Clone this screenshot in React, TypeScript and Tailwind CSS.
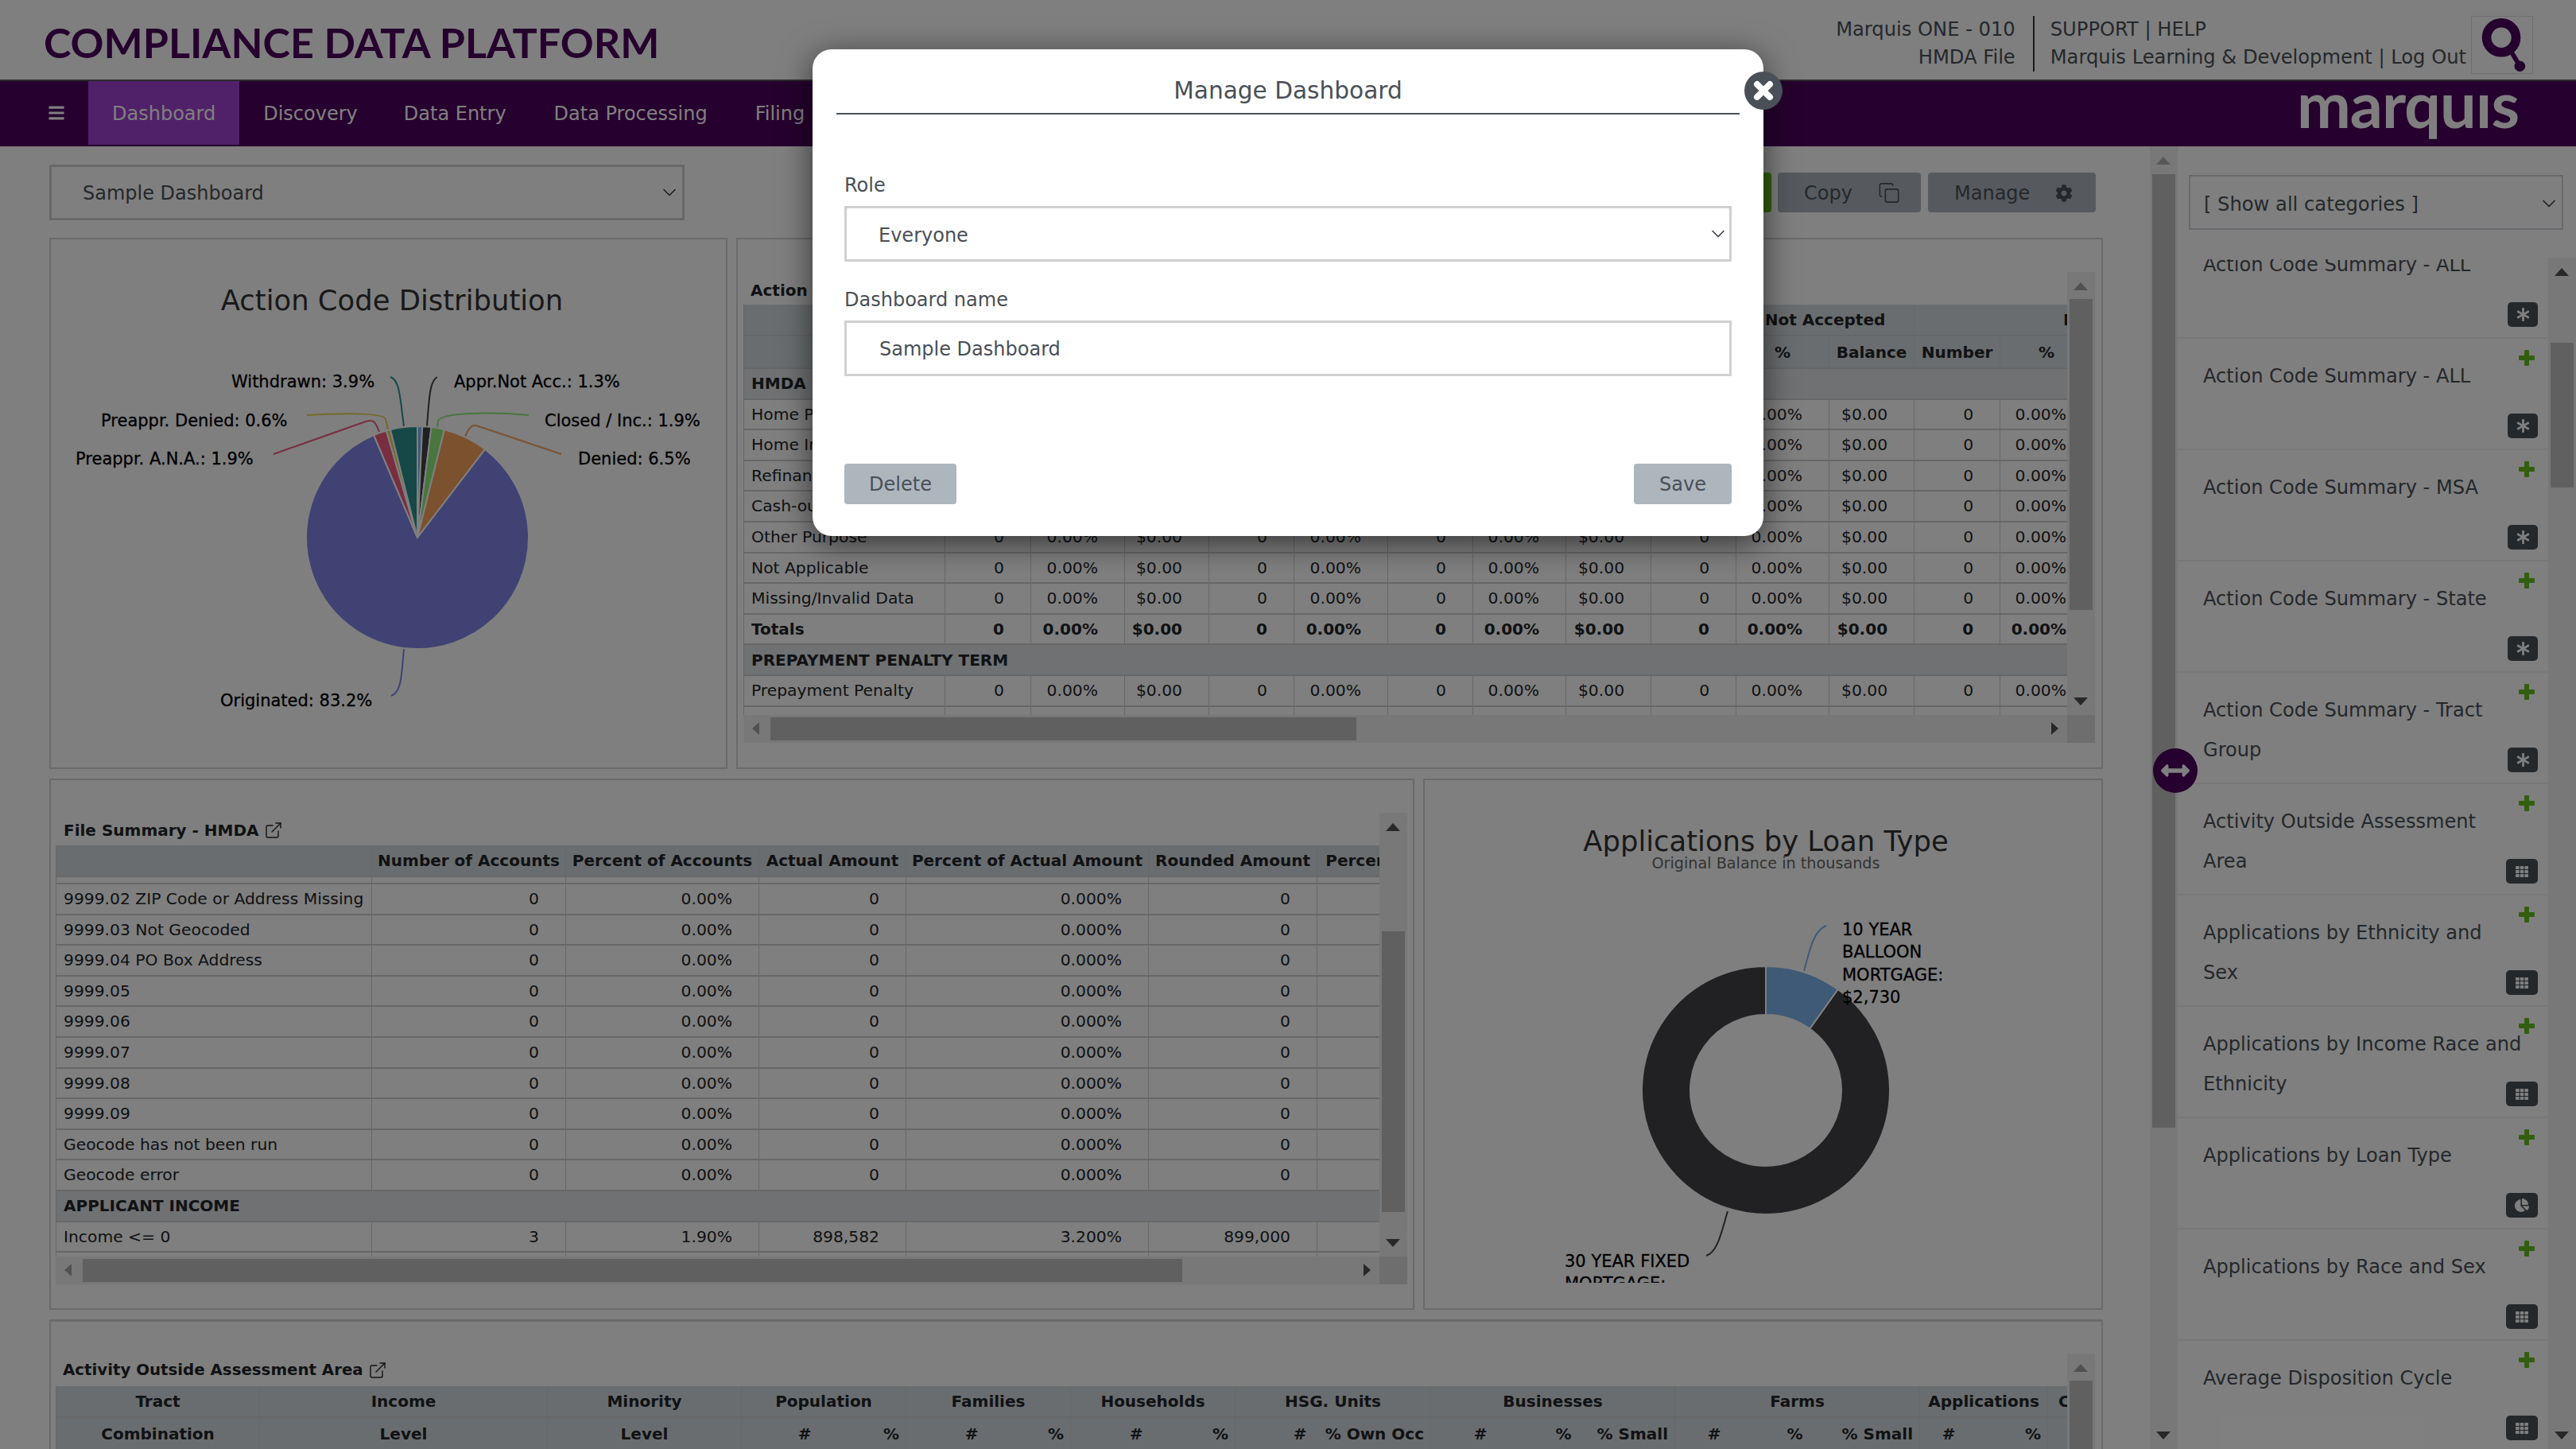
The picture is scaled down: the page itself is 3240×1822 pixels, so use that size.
import { ChevronDown, Copy, ExternalLink } from "lucide-react";
import { FaArrowsAltH, FaAsterisk, FaBars, FaChartPie, FaCog, FaTh } from "react-icons/fa";

const Chevron = ({ className }: { className: string }) => (
  <ChevronDown strokeWidth={1.3} className={"pointer-events-none absolute h-[28px] w-[28px] text-[#343a40] " + className} />
);

const UpArrow = ({ c }: { c: string }) => <div className={"h-0 w-0 border-x-[9px] border-b-[10px] border-x-transparent " + c} />;
const DownArrow = ({ c }: { c: string }) => <div className={"h-0 w-0 border-x-[9px] border-t-[10px] border-x-transparent " + c} />;

function VBar({ thumb, top = "border-b-[#505050]", className = "" }: { thumb: string; top?: string; className?: string }) {
  return (
    <div className={"relative w-[35px] shrink-0 bg-[#f1f1f1] px-[3px] " + className}>
      <div className={"bg-[#c1c1c1] " + thumb} />
      <div className="absolute left-[8px] top-[13px]"><UpArrow c={top} /></div>
      <div className="absolute bottom-[12px] left-[8px]"><DownArrow c="border-t-[#505050]" /></div>
    </div>
  );
}

function HBar({ thumb }: { thumb: string }) {
  return (
    <div className="flex">
      <div className="relative flex h-[35px] w-[1665px] bg-[#f1f1f1] py-[3px]">
        <div className={"bg-[#c1c1c1] " + thumb} />
        <div className="absolute left-[11px] top-[9px] h-0 w-0 border-y-[8px] border-r-[9px] border-y-transparent border-r-[#a3a3a3]" />
        <div className="absolute right-[11px] top-[9px] h-0 w-0 border-y-[8px] border-l-[9px] border-y-transparent border-l-[#505050]" />
      </div>
      <div className="h-[35px] w-[35px] bg-[#dcdcdc]" />
    </div>
  );
}

const cellBase = "border-x border-b-2 border-[#cfcfcf] whitespace-nowrap overflow-hidden";
const num = "h-[38.6px] pr-[33px] text-right " + cellBase;
const lab = "h-[38.6px] pl-[9px] text-left " + cellBase;
const head = "bg-[#d5dadf] text-[20px] font-bold text-center " + cellBase;

const summaryCols = ["w-[253px]", "w-[108px]", "w-[118px]", "w-[106px]", "w-[107px]", "w-[118px]", "w-[107px]", "w-[117px]", "w-[107px]", "w-[107px]", "w-[117px]", "w-[107px]", "w-[108px]", "w-[117px]", "w-[229px]"];
const zeroRow = ["0", "0.00%", "$0.00", "0", "0.00%", "0", "0.00%", "$0.00", "0", "0.00%", "$0.00", "0", "0.00%"];

function SummaryRow({ label, bold }: { label: string; bold?: boolean }) {
  return (
    <tr className={bold ? "text-[20px] font-bold" : ""}>
      <td className={lab}>{label}</td>
      {zeroRow.map((v, i) => (
        <td key={i} className={num}>{v}</td>
      ))}
      <td className={num} />
    </tr>
  );
}

const Section = ({ label, span }: { label: string; span: number }) => (
  <tr>
    <td colSpan={span} className={"h-[38.6px] bg-[#dee2e6] pl-[9px] text-[20px] font-bold " + cellBase}>{label}</td>
  </tr>
);

function ActionSummaryPanel() {
  return (
    <div className="h-[668px] w-[1719px] border-2 border-[#d4d4d8] pl-[7px] pt-[41px]">
      <div className="flex h-[557px]">
        <div className="relative w-[1665px] overflow-hidden pt-[41px] text-[20.3px] text-[#212529]">
          <div className="absolute left-[9px] top-[8px] text-[20px] font-bold">Action Code Summary - ALL</div>
          <table className="w-[1926px] table-fixed border-collapse">
            <colgroup>
              {summaryCols.map((c, i) => (
                <col key={i} className={c} />
              ))}
            </colgroup>
            <tbody>
              <tr className="h-[39px]">
                <td className={head} />
                <td colSpan={3} className={head} />
                <td colSpan={2} className={head} />
                <td colSpan={3} className={head} />
                <td className={head} />
                <td colSpan={2} className={head}>Not Accepted</td>
                <td colSpan={3} className={head}>Denied</td>
              </tr>
              <tr className="h-[41px]">
                <td className={head} />
                {["Number", "%", "Balance", "Number", "%", "Number", "%", "Balance", "Number", "%", "Balance", "Number", "%"].map((h, i) => (
                  <td key={i} className={head}>{h}</td>
                ))}
                <td className={head} />
              </tr>
              <Section label="HMDA LOAN PURPOSE" span={15} />
              {["Home Purchase", "Home Improvement", "Refinancing", "Cash-out Refinancing", "Other Purpose", "Not Applicable", "Missing/Invalid Data"].map((r) => (
                <SummaryRow key={r} label={r} />
              ))}
              <SummaryRow label="Totals" bold />
              <Section label="PREPAYMENT PENALTY TERM" span={15} />
              <SummaryRow label="Prepayment Penalty" />
              <SummaryRow label="No Prepayment Penalty" />
            </tbody>
          </table>
        </div>
        <VBar thumb="mt-[34px] h-[391px]" top="border-b-[#a3a3a3]" />
      </div>
      <HBar thumb="ml-[34px] w-[737px]" />
    </div>
  );
}

const fileCols = ["w-[397px]", "w-[244px]", "w-[243px]", "w-[185px]", "w-[305px]", "w-[212px]", "w-[340px]"];
const fileRows: string[][] = [
  ["9999.02 ZIP Code or Address Missing", "0", "0.00%", "0", "0.000%", "0"],
  ["9999.03 Not Geocoded", "0", "0.00%", "0", "0.000%", "0"],
  ["9999.04 PO Box Address", "0", "0.00%", "0", "0.000%", "0"],
  ["9999.05", "0", "0.00%", "0", "0.000%", "0"],
  ["9999.06", "0", "0.00%", "0", "0.000%", "0"],
  ["9999.07", "0", "0.00%", "0", "0.000%", "0"],
  ["9999.08", "0", "0.00%", "0", "0.000%", "0"],
  ["9999.09", "0", "0.00%", "0", "0.000%", "0"],
  ["Geocode has not been run", "0", "0.00%", "0", "0.000%", "0"],
  ["Geocode error", "0", "0.00%", "0", "0.000%", "0"],
];

const FileRow = ({ r }: { r: string[] }) => (
  <tr>
    {r.map((v, i) => (
      <td key={i} className={i === 0 ? lab : num}>{v}</td>
    ))}
    <td className={num} />
  </tr>
);

function FileSummaryPanel() {
  return (
    <div className="h-[668px] w-[1717px] border-2 border-[#d4d4d8] pl-[6px] pt-[41px]">
      <div className="flex h-[558px]">
        <div className="relative w-[1665px] overflow-hidden pt-[41px] text-[20.3px] text-[#212529]">
          <div className="absolute left-[10px] top-[7px] flex items-center gap-[6px] text-[20px] font-bold">
            File Summary - HMDA <ExternalLink className="h-[24px] w-[24px]" strokeWidth={1.4} />
          </div>
          <table className="w-[1926px] table-fixed border-collapse">
            <colgroup>
              {fileCols.map((c, i) => (
                <col key={i} className={c} />
              ))}
            </colgroup>
            <tbody>
              <tr className="h-[39px]">
                {["", "Number of Accounts", "Percent of Accounts", "Actual Amount", "Percent of Actual Amount", "Rounded Amount", "Percent of Rounded Amount"].map((h, i) => (
                  <td key={i} className={head}>{h}</td>
                ))}
              </tr>
              <tr className="h-[9px]">
                {fileCols.map((c) => (
                  <td key={c} className={cellBase} />
                ))}
              </tr>
              {fileRows.map((r) => (
                <FileRow key={r[0]} r={r} />
              ))}
              <Section label="APPLICANT INCOME" span={7} />
              <FileRow r={["Income <= 0", "3", "1.90%", "898,582", "3.200%", "899,000"]} />
              <FileRow r={["0 < Income <= 50", "", "", "", "", ""]} />
            </tbody>
          </table>
        </div>
        <VBar thumb="mt-[149px] h-[353px]" />
      </div>
      <HBar thumb="ml-[34px] w-[1383px]" />
    </div>
  );
}

const tractCols = ["w-[256px]", "w-[362px]", "w-[244px]", "w-[96px]", "w-[111px]", "w-[99px]", "w-[108px]", "w-[99px]", "w-[108px]", "w-[98px]", "w-[148px]", "w-[79px]", "w-[106px]", "w-[122px]", "w-[66px]", "w-[103px]", "w-[139px]", "w-[53px]", "w-[108px]", "w-[130px]"];
const tractGroups: [string, number][] = [
  ["Tract", 1], ["Income", 1], ["Minority", 1], ["Population", 2], ["Families", 2], ["Households", 2], ["HSG. Units", 2], ["Businesses", 3], ["Farms", 3], ["Applications", 2],
];
const tractSubs: [string, boolean][] = [
  ["#", true], ["%", false], ["#", true], ["%", false], ["#", true], ["%", false], ["#", true], ["% Own Occ", false],
  ["#", true], ["%", false], ["% Small", false], ["#", true], ["%", false], ["% Small", false], ["#", true], ["%", false],
];

function ActivityPanel() {
  return (
    <div className="mt-[12px] h-[200px] w-[2583px] border-2 border-t-[3px] border-[#d4d4d8] pl-[6px] pt-[40px]">
      <div className="flex h-[160px]">
        <div className="relative w-[2530px] overflow-hidden pt-[41px] text-[20px] text-[#212529]">
          <div className="absolute left-[9px] top-[6px] flex items-center gap-[6px] text-[19.8px] font-bold">
            Activity Outside Assessment Area <ExternalLink className="h-[24px] w-[24px]" strokeWidth={1.4} />
          </div>
          <table className="w-[2635px] table-fixed border-collapse">
            <colgroup>
              {tractCols.map((c, i) => (
                <col key={i} className={c} />
              ))}
            </colgroup>
            <tbody>
              <tr className="h-[39px]">
                {tractGroups.map(([g, s]) => (
                  <td key={g} colSpan={s} className={head}>{g}</td>
                ))}
                <td className={"bg-[#d5dadf] pl-[13px] text-left font-bold " + cellBase}>Census</td>
              </tr>
              <tr className="h-[41px]">
                {["Combination", "Level", "Level"].map((h, i) => (
                  <td key={i} className={head}>{h}</td>
                ))}
                {tractSubs.map(([h, first], i) => (
                  <td key={i} className={"border-b-2 border-[#cfcfcf] bg-[#d5dadf] pr-[8px] text-right font-bold whitespace-nowrap " + (first ? "border-l" : "")}>{h}</td>
                ))}
                <td className={head} />
              </tr>
            </tbody>
          </table>
        </div>
        <VBar thumb="mt-[34px] h-[200px]" top="border-b-[#a3a3a3]" />
      </div>
    </div>
  );
}

const toPoint = (cx: number, cy: number, r: number, a: number) => {
  const t = ((a - 90) * Math.PI) / 180;
  return [cx + r * Math.cos(t), cy + r * Math.sin(t)];
};

function arc(cx: number, cy: number, r: number, r2: number, a0: number, a1: number) {
  const [x0, y0] = toPoint(cx, cy, r, a0);
  const [x1, y1] = toPoint(cx, cy, r, a1);
  const large = a1 - a0 > 180 ? 1 : 0;
  if (r2 === 0) return `M${cx} ${cy}L${x0} ${y0}A${r} ${r} 0 ${large} 1 ${x1} ${y1}Z`;
  const [x2, y2] = toPoint(cx, cy, r2, a1);
  const [x3, y3] = toPoint(cx, cy, r2, a0);
  return `M${x0} ${y0}A${r} ${r} 0 ${large} 1 ${x1} ${y1}L${x2} ${y2}A${r2} ${r2} 0 ${large} 0 ${x3} ${y3}Z`;
}

const pieSlices: [string, number][] = [
  ["#7cb5ec", 0.7], ["#434348", 1.3], ["#90ed7d", 1.9], ["#f7a35c", 6.5], ["#8085e9", 83.2], ["#f15c80", 1.9], ["#e4d354", 0.6], ["#2b908f", 3.9],
];

const pieLabels: [string, number, number][] = [
  ["Withdrawn: 3.9%", 291, 487], ["Appr.Not Acc.: 1.3%", 571, 487], ["Preappr. Denied: 0.6%", 127, 536], ["Closed / Inc.: 1.9%", 685, 536],
  ["Preappr. A.N.A.: 1.9%", 95, 584], ["Denied: 6.5%", 727, 584], ["Originated: 83.2%", 277, 888],
];

const pieLines: [string, string][] = [
  ["#2b908f", "M491 474C503 478 503 500 508 536"],
  ["#434348", "M550 474C540 480 540 500 537 536"],
  ["#e4d354", "M386 522C420 520 482 518 485 527L488 540"],
  ["#90ed7d", "M665 522C620 518 553 518 551 530L550 538"],
  ["#f15c80", "M344 571L460 530C470 527 472 530 477 543"],
  ["#f7a35c", "M706 571L605 537C597 534 592 532 585 549"],
  ["#8085e9", "M508 816C505 850 505 870 492 875"],
];

function PieChart() {
  let start = 0;
  return (
    <svg viewBox="64 301 849 664" className="block h-[664px] w-[849px]">
      <text x="493" y="390" textAnchor="middle" fontSize="35.4" fill="#333333">Action Code Distribution</text>
      {pieLines.map(([c, d]) => (
        <path key={c} d={d} fill="none" stroke={c} strokeWidth="2" />
      ))}
      {pieSlices.map(([c, v]) => {
        const a0 = start;
        start += v * 3.6;
        return <path key={c} d={arc(525, 676, 140, 0, a0, start)} fill={c} stroke="#ffffff" strokeWidth="2" />;
      })}
      {pieLabels.map(([t, x, y]) => (
        <text key={t} x={x} y={y} fontSize="21" fill="#000000" stroke="#000000" strokeWidth="0.3">{t}</text>
      ))}
    </svg>
  );
}

function DonutChart() {
  return (
    <svg viewBox="1792 981 851 632" className="block h-[632px] w-[851px]">
      <text x="2221" y="1070" textAnchor="middle" fontSize="35.4" fill="#333333">Applications by Loan Type</text>
      <text x="2221" y="1092" textAnchor="middle" fontSize="19.2" fill="#666666">Original Balance in thousands</text>
      <path d="M2297 1164C2282 1170 2277 1190 2269 1221" fill="none" stroke="#7cb5ec" strokeWidth="2" />
      <path d="M2146 1579C2160 1575 2165 1550 2173 1523" fill="none" stroke="#434348" strokeWidth="2" />
      <path d={arc(2221, 1371, 156, 95, 35.5, 360)} fill="#434348" stroke="#ffffff" strokeWidth="2" />
      <path d={arc(2221, 1371, 156, 95, 0, 35.5)} fill="#7cb5ec" stroke="#ffffff" strokeWidth="2" />
      {["10 YEAR", "BALLOON", "MORTGAGE:", "$2,730"].map((t, i) => (
        <text key={t} x="2317" y={1176 + i * 28.4} fontSize="21" fill="#000000" stroke="#000000" strokeWidth="0.3">{t}</text>
      ))}
      {["30 YEAR FIXED", "MORTGAGE:"].map((t, i) => (
        <text key={t} x="1968" y={1593 + i * 28} fontSize="21" fill="#000000" stroke="#000000" strokeWidth="0.3">{t}</text>
      ))}
    </svg>
  );
}

type Item = { title: string; icon: "star" | "grid" | "pie" };
const items: Item[] = [
  { title: "Action Code Summary - ALL", icon: "star" },
  { title: "Action Code Summary - ALL", icon: "star" },
  { title: "Action Code Summary - MSA", icon: "star" },
  { title: "Action Code Summary - State", icon: "star" },
  { title: "Action Code Summary - Tract\nGroup", icon: "star" },
  { title: "Activity Outside Assessment\nArea", icon: "grid" },
  { title: "Applications by Ethnicity and\nSex", icon: "grid" },
  { title: "Applications by Income Race and\nEthnicity", icon: "grid" },
  { title: "Applications by Loan Type", icon: "pie" },
  { title: "Applications by Race and Sex", icon: "grid" },
  { title: "Average Disposition Cycle", icon: "grid" },
];

const PlusIcon = () => (
  <svg viewBox="0 0 20 20" className="absolute left-[429px] top-[14px] h-[20px] w-[20px]">
    <path d="M7 1a1 1 0 0 1 1-1h4a1 1 0 0 1 1 1v6h6a1 1 0 0 1 1 1v4a1 1 0 0 1-1 1h-6v6a1 1 0 0 1-1 1H8a1 1 0 0 1-1-1v-6H1a1 1 0 0 1-1-1V8a1 1 0 0 1 1-1h6z" fill="#66bc20" />
  </svg>
);

function ReportItem({ item, first }: { item: Item; first: boolean }) {
  return (
    <div className="relative h-[140px] border-b-2 border-[#f0f0f0] pl-[32px] pt-[22px]">
      <div className="whitespace-pre-line text-[24.1px] leading-[50px] text-[#495057]">{item.title}</div>
      {!first && <PlusIcon />}
      <div className={"absolute top-[94px] flex h-[31px] items-center justify-center rounded-[5px] bg-[#495057] text-white " + (item.icon === "star" ? "left-[415px] w-[38px]" : "left-[413px] w-[40px]")}>
        {item.icon === "star" && <FaAsterisk className="h-[17px] w-[17px]" />}
        {item.icon === "grid" && <FaTh className="h-[16px] w-[20px]" />}
        {item.icon === "pie" && <FaChartPie className="h-[17px] w-[20px]" />}
      </div>
    </div>
  );
}

function Sidebar() {
  return (
    <aside className="flex h-[1638px] w-[501px] shrink-0 flex-col overflow-hidden pt-[36px] text-[24.2px] text-[#495057]">
      <div className="relative ml-[14px] w-[471px]">
        <select className="h-[69px] w-full appearance-none border-2 border-[#ced4da] bg-white pl-[17px] pt-[5px]">
          <option>[ Show all categories ]</option>
        </select>
        <Chevron className="right-[4px] top-[22px]" />
      </div>
      <div className="mt-[35px] flex min-h-0 flex-1">
        <div className="mt-[2px] w-[467px] overflow-hidden">
          <div className="-mt-[40px]">
            {items.map((it, i) => (
              <ReportItem key={i} item={it} first={i === 0} />
            ))}
          </div>
        </div>
        <VBar thumb="mt-[107px] h-[182px]" className="w-[34px]" />
      </div>
    </aside>
  );
}

function ManageModal() {
  return (
    <div className="absolute inset-0 flex justify-center bg-black/50 pt-[62px]">
      <div className="relative h-[612px] w-[1196px] rounded-[24px] bg-white text-[24px] text-[#495057] shadow-[0_8px_40px_rgba(0,0,0,0.6)]">
        <div className="mx-[30px] flex h-[82px] items-center justify-center border-b-2 border-[#495057] pt-[24px] text-[29.6px]">Manage Dashboard</div>
        <button className="absolute left-[1172px] top-[28px] h-[48px] w-[48px] rounded-full bg-[#495057]">
          <svg viewBox="0 0 48 48" className="h-[48px] w-[48px]">
            <path d="M16 16L32 32M32 16L16 32" stroke="#ffffff" strokeWidth="8" strokeLinecap="round" />
          </svg>
        </button>
        <div className="px-[40px]">
          <label className="mb-[8px] mt-[71px] block leading-[36px]">Role</label>
          <div className="relative">
            <select className="h-[70px] w-full appearance-none border-[3px] border-[#d0d0d0] bg-white pl-[40px] pt-[4px]">
              <option>Everyone</option>
            </select>
            <Chevron className="right-[3px] top-[21px]" />
          </div>
          <label className="mb-[8px] mt-[30px] block leading-[36px]">Dashboard name</label>
          <input readOnly value="Sample Dashboard" className="h-[70px] w-full border-[3px] border-[#d0d0d0] pl-[41px] pt-[2px]" />
          <div className="mt-[110px] flex justify-between">
            <button className="h-[51px] w-[141px] rounded-[4px] bg-[#adb5bd]">Delete</button>
            <button className="h-[51px] w-[123px] rounded-[4px] bg-[#adb5bd]">Save</button>
          </div>
        </div>
      </div>
    </div>
  );
}

export default function App() {
  return (
    <div className="relative h-[1822px] w-[3240px] overflow-hidden bg-white font-['DejaVu_Sans',sans-serif] text-[#495057]">
      <header className="flex h-[100px] items-start justify-between">
        <h1 className="pl-[55px] pt-[19px] font-['Lato',sans-serif] text-[52px] font-bold leading-[68px] text-[#4c005c]">COMPLIANCE DATA PLATFORM</h1>
        <div className="flex items-start pr-[54px] pt-[20px] text-[24.2px] leading-[35px]">
          <div className="pr-[22px] text-right">
            <div>Marquis ONE - 010</div>
            <div>HMDA File</div>
          </div>
          <div className="border-l-2 border-[#343a40] pl-[20px]">
            <div>SUPPORT | HELP</div>
            <div>Marquis Learning &amp; Development | Log Out</div>
          </div>
          <svg viewBox="0 0 78 73" className="ml-[6px] h-[73px] w-[78px] border border-[#dddddd]">
            <circle cx="38" cy="27" r="19" fill="none" stroke="#4c005c" strokeWidth="12" />
            <path d="M50 44L61 62" stroke="#4c005c" strokeWidth="6" />
            <circle cx="62" cy="64" r="7" fill="#4c005c" />
          </svg>
        </div>
      </header>

      <nav className="flex h-[84px] items-start border-t-2 border-[#555555] bg-[#4c005c] text-[24px] text-white">
        <div className="flex h-[80px] w-[111px] items-center pl-[60px]">
          <FaBars className="h-[22px] w-[22px]" />
        </div>
        <div className="flex h-[80px] items-center bg-[#a040d0] px-[30px] pt-[2px]">Dashboard</div>
        <div className="flex h-[80px] items-center pl-[30px] pr-[28px] pt-[2px]">Discovery</div>
        {["Data Entry", "Data Processing", "Filing"].map((t) => (
          <div key={t} className="flex h-[80px] items-center px-[30px] pt-[2px]">{t}</div>
        ))}
        <div className="ml-auto pr-[72px] pt-[4px] font-['Lato',sans-serif] text-[81px] font-bold leading-[48px] tracking-[-1px]">marquıs</div>
      </nav>

      <div className="flex h-[1638px]">
        <main className="w-[2704px] shrink-0 overflow-hidden pl-[62px] pr-[59px] pt-[23px] text-[24px]">
          <div className="flex h-[70px] items-start justify-between pr-[9px]">
            <div className="relative w-[799px]">
              <select className="h-[70px] w-full appearance-none border-[3px] border-[#d0d0d0] bg-white pl-[39px] pt-[2px]">
                <option>Sample Dashboard</option>
              </select>
              <Chevron className="right-[5px] top-[21px]" />
            </div>
            <div className="mt-[10px] flex gap-[8px]">
              <button className="h-[50px] w-[130px] rounded-[4px] bg-[#66bc20]" />
              <button className="flex h-[50px] w-[180px] items-center gap-[32px] rounded-[4px] bg-[#adb5bd] pl-[33px] pt-px">
                Copy <Copy className="h-[29px] w-[28px]" strokeWidth={1.4} />
              </button>
              <button className="ml-px flex h-[50px] w-[211px] items-center gap-[32px] rounded-[4px] bg-[#adb5bd] pl-[33px] pt-px">
                Manage <FaCog className="h-[22px] w-[22px]" />
              </button>
            </div>
          </div>

          <div className="mt-[22px] flex gap-[11px]">
            <div className="h-[668px] w-[853px] border-2 border-[#d4d4d8]">
              <PieChart />
            </div>
            <ActionSummaryPanel />
          </div>

          <div className="mt-[12px] flex gap-[11px]">
            <FileSummaryPanel />
            <div className="h-[668px] w-[855px] border-2 border-[#d4d4d8]">
              <DonutChart />
            </div>
          </div>

          <ActivityPanel />
        </main>

        <VBar thumb="mt-[35px] h-[1199px]" top="border-b-[#b0b0b0]" />
        <Sidebar />
      </div>

      <div className="absolute left-[2708px] top-[941px] flex h-[56px] w-[56px] items-center justify-center rounded-full bg-[#4c005c] text-white">
        <FaArrowsAltH className="h-[36px] w-[42px]" />
      </div>

      <ManageModal />
    </div>
  );
}
